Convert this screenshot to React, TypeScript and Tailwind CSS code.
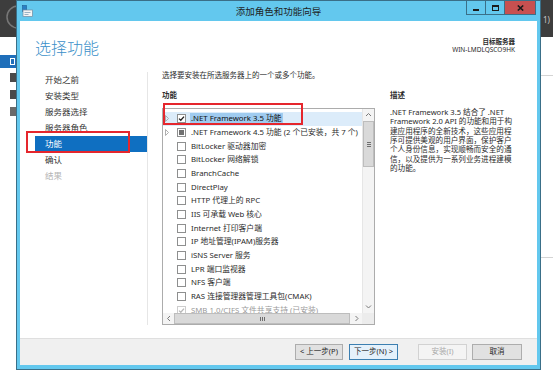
type Check = "on" | "mixed" | "installed";

type Feature = {
  label: string;
  check?: Check;
  expand?: boolean;
  selected?: boolean;
};

const features: Feature[] = [
  { label: ".NET Framework 3.5 功能", check: "on", expand: true, selected: true },
  { label: ".NET Framework 4.5 功能 (2 个已安装，共 7 个)", check: "mixed", expand: true },
  { label: "BitLocker 驱动器加密" },
  { label: "BitLocker 网络解锁" },
  { label: "BranchCache" },
  { label: "DirectPlay" },
  { label: "HTTP 代理上的 RPC" },
  { label: "IIS 可承载 Web 核心" },
  { label: "Internet 打印客户端" },
  { label: "IP 地址管理(IPAM)服务器" },
  { label: "iSNS Server 服务" },
  { label: "LPR 端口监视器" },
  { label: "NFS 客户端" },
  { label: "RAS 连接管理器管理工具包(CMAK)" },
  { label: "SMB 1.0/CIFS 文件共享支持 (已安装)", check: "installed" },
];

const steps = [
  { label: "开始之前" },
  { label: "安装类型" },
  { label: "服务器选择" },
  { label: "服务器角色" },
  { label: "功能", active: true },
  { label: "确认" },
  { label: "结果", disabled: true },
];

const description = [
  ".NET Framework 3.5 结合了 .NET",
  "Framework 2.0 API 的功能和用于构",
  "建应用程序的全新技术，这些应用程",
  "序可提供美观的用户界面，保护客户",
  "个人身份信息，实现顺畅而安全的通",
  "信，以及提供为一系列业务进程建模",
  "的功能。",
];

function Chevron({ dir }: { dir: "up" | "down" | "left" | "right" }) {
  const d = {
    up: "M1 4 L3.5 1.5 L6 4",
    down: "M1 1.5 L3.5 4 L6 1.5",
    left: "M4 1 L1.5 3.5 L4 6",
    right: "M1.5 1 L4 3.5 L1.5 6",
  }[dir];
  const vertical = dir === "up" || dir === "down";
  return (
    <svg
      width={vertical ? 7 : 6}
      height={vertical ? 6 : 7}
      viewBox={vertical ? "0 0 7 6" : "0 0 6 7"}
      fill="none"
      stroke="#7a7a7a"
      strokeWidth="1"
    >
      <path d={d} />
    </svg>
  );
}

function CheckBox({ state }: { state?: Check }) {
  return (
    <span
      className={`flex h-[9px] w-[9px] shrink-0 items-center justify-center border bg-white ${state === "installed" ? "border-[#cdcdcd]" : "border-[#8e8f8f]"}`}
    >
      {(state === "on" || state === "installed") && (
        <svg width="7" height="7" viewBox="0 0 7 7" fill="none">
          <path
            d="M1 3.6 L2.8 5.3 L6 1.6"
            stroke={state === "installed" ? "#b8b8b8" : "#1f1f1f"}
            strokeWidth="1.3"
          />
        </svg>
      )}
      {state === "mixed" && <span className="h-[5px] w-[5px] bg-[#707070]" />}
    </span>
  );
}

function FeatureRow({ f }: { f: Feature }) {
  return (
    <div
      className={`flex h-[13.67px] shrink-0 items-center whitespace-nowrap pl-[2px] ${f.selected ? "bg-[#dcecfa]" : ""}`}
    >
      <span className="flex w-[12px] shrink-0 items-center">
        {f.expand && (
          <svg width="4" height="7" viewBox="0 0 4 7" fill="none">
            <path d="M0.5 0.5 L3.5 3.5 L0.5 6.5 Z" stroke="#a6a6a6" strokeWidth="0.9" />
          </svg>
        )}
      </span>
      <CheckBox state={f.check} />
      <span
        className={`ml-[4px] px-[1px] text-[7.8px] leading-[11px] ${f.selected ? "bg-[#9fcbef] text-[#111]" : f.check === "installed" ? "text-[#9a9a9a]" : "text-[#2b2b2b]"}`}
      >
        {f.label}
      </span>
    </div>
  );
}

function FeatureList() {
  return (
    <div className="mt-[8px] flex h-[217px] flex-col border border-[#acacac] bg-white">
      <div className="flex min-h-0 flex-1">
        <div className="flex min-w-0 flex-1 flex-col overflow-hidden pt-[3px]">
          {features.map((f) => (
            <FeatureRow key={f.label} f={f} />
          ))}
        </div>
        <div className="flex w-[12px] flex-col border-l border-[#e6e6e6] bg-[#f4f4f4]">
          <span className="flex h-[12px] items-center justify-center">
            <Chevron dir="up" />
          </span>
          <span className="flex h-[46px] flex-col items-center justify-center gap-[1px] border border-[#bdbdbd] bg-[#d9d9d9]">
            <span className="h-px w-[4px] bg-[#6e6e6e]" />
            <span className="h-px w-[4px] bg-[#6e6e6e]" />
            <span className="h-px w-[4px] bg-[#6e6e6e]" />
          </span>
          <span className="flex-1" />
          <span className="flex h-[12px] items-center justify-center">
            <Chevron dir="down" />
          </span>
        </div>
      </div>
      <div className="flex h-[11px] shrink-0">
        <div className="flex flex-1 items-stretch bg-[#f4f4f4]">
          <span className="flex w-[11px] items-center justify-center">
            <Chevron dir="left" />
          </span>
          <span className="flex w-[176px] items-center justify-center gap-[1px] border border-[#bdbdbd] bg-[#d9d9d9]">
            <span className="h-[4px] w-px bg-[#6e6e6e]" />
            <span className="h-[4px] w-px bg-[#6e6e6e]" />
            <span className="h-[4px] w-px bg-[#6e6e6e]" />
          </span>
          <span className="flex-1" />
          <span className="flex w-[11px] items-center justify-center">
            <Chevron dir="right" />
          </span>
        </div>
        <div className="w-[12px] bg-[#ececec]" />
      </div>
    </div>
  );
}

function TitleIcon() {
  return (
    <svg width="11" height="12" viewBox="0 0 11 12">
      <rect x="0.5" y="0.5" width="4" height="6" fill="#2a7fc4" stroke="#1d5e94" strokeWidth="0.6" />
      <rect x="1" y="5" width="9.5" height="6.5" fill="#f4f4f4" stroke="#6f8aa0" strokeWidth="0.7" />
      <rect x="2.5" y="7" width="6" height="1" fill="#9bb2c4" />
      <rect x="2.5" y="9" width="4" height="1" fill="#9bb2c4" />
    </svg>
  );
}

function CaptionButtons() {
  return (
    <div className="-mt-px mr-[4px] flex h-[15px] border border-[#3a6f88]">
      <span className="flex w-[19px] items-end justify-center border-r border-[#3a6f88] pb-[3px]">
        <span className="h-[2px] w-[6px] bg-[#1c1c1c]" />
      </span>
      <span className="flex w-[19px] items-center justify-center border-r border-[#3a6f88]">
        <span className="h-[6px] w-[7px] border border-t-2 border-[#1c1c1c]" />
      </span>
      <span className="flex w-[30px] items-center justify-center bg-[#c75050]">
        <svg width="7" height="6" viewBox="0 0 7 6" fill="none">
          <path d="M0.8 0.5 L6.2 5.5 M6.2 0.5 L0.8 5.5" stroke="#1a1a1a" strokeWidth="1.6" />
        </svg>
      </span>
    </div>
  );
}

function WizardWindow() {
  return (
    <div className="absolute left-[16px] top-0 flex h-[370px] w-[525px] flex-col border border-[#3a6f88] bg-[#63c8ee] px-[3px] pb-[4px]">
      <div className="-mx-[3px] grid h-[20px] shrink-0 grid-cols-[1fr_auto_1fr] items-start">
        <span className="ml-[5px] mt-[4px]">
          <TitleIcon />
        </span>
        <span className="text-[9.5px] leading-[21px] text-[#1f1f1f]">添加角色和功能向导</span>
        <span className="flex justify-end">
          <CaptionButtons />
        </span>
      </div>

      <div className="flex min-h-0 flex-1 flex-col bg-white">
        <div className="flex h-[45px] shrink-0 items-start justify-between pl-[15px] pr-[22px]">
          <h1 className="mt-[18px] text-[16px] font-light leading-[18px] text-[#3a8fc9]">选择功能</h1>
          <div className="mt-[17px] flex flex-col items-end text-[6.5px] leading-[8px] text-[#2b2b2b]">
            <span className="font-bold">目标服务器</span>
            <span>WIN-LMDLQSCO9HK</span>
          </div>
        </div>

        <div className="flex min-h-0 flex-1">
          <nav className="mb-[13px] mt-[6px] flex w-[128px] shrink-0 flex-col border-r border-[#e6e6e6] pl-[15px]">
            {steps.map((s) => (
              <div
                key={s.label}
                className={`flex h-[16px] items-center pl-[10px] text-[8.5px] ${s.active ? "bg-[#0f6fc1] text-white" : s.disabled ? "text-[#b4b4b4]" : "text-[#333]"}`}
              >
                {s.label}
              </div>
            ))}
          </nav>

          <section className="ml-[14px] flex w-[213px] shrink-0 flex-col pt-[4px]">
            <p className="h-[10px] whitespace-nowrap text-[7.5px] leading-[10px] text-[#2b2b2b]">
              选择要安装在所选服务器上的一个或多个功能。
            </p>
            <h2 className="mt-[10px] h-[10px] text-[7.5px] font-bold leading-[10px] text-[#2b2b2b]">功能</h2>
            <FeatureList />
          </section>

          <section className="ml-[15px] flex w-[130px] shrink-0 flex-col pt-[24px]">
            <h2 className="h-[10px] text-[7.5px] font-bold leading-[10px] text-[#2b2b2b]">描述</h2>
            <div className="mt-[8px] text-[7.6px] leading-[9.33px] text-[#2b2b2b]">
              {description.map((line) => (
                <div key={line} className="whitespace-nowrap">
                  {line}
                </div>
              ))}
            </div>
          </section>
        </div>

        <div className="flex h-[27px] shrink-0 items-center justify-end border-t border-[#dfdfdf] bg-[#f0f0f0] pr-[15px] text-[7.5px]">
          <button className="h-[16px] w-[48px] border border-[#adadad] bg-[#e1e1e1] text-[#1f1f1f]">
            &lt; 上一步(P)
          </button>
          <button className="ml-[6px] h-[16px] w-[49px] border border-[#3c7fb1] bg-[#e5f1fb] text-[#1f1f1f]">
            下一步(N) &gt;
          </button>
          <button className="ml-[20px] h-[16px] w-[49px] border border-[#d2d2d2] bg-[#f4f4f4] text-[#a8a8a8]">
            安装(I)
          </button>
          <button className="ml-[5px] h-[16px] w-[50px] border border-[#adadad] bg-[#e1e1e1] text-[#1f1f1f]">
            取消
          </button>
        </div>
      </div>
    </div>
  );
}

function Backdrop() {
  return (
    <div className="flex h-full flex-col">
      <div className="flex h-[37px] shrink-0 items-start justify-between bg-[#3d3d3d]">
        <svg className="ml-[6px] mt-[5px]" width="24" height="24" viewBox="0 0 24 24" fill="none">
          <circle cx="12" cy="12" r="11" stroke="#777" strokeWidth="1.5" />
        </svg>
        <span className="mr-[3px] mt-[15px] text-[8px] leading-[10px] text-[#c9c9c9]">1)</span>
      </div>
      <div className="flex flex-1">
        <div className="flex w-[16px] flex-col pt-[18px]">
          <div className="flex h-[13px] items-center justify-end bg-[#1f6fba] pr-[1px]">
            <span className="h-[7px] w-[5px] border border-white" />
          </div>
          <span className="ml-[10px] mt-[5px] h-[9px] w-[6px] bg-[#4a4a4a]" />
          <span className="ml-[10px] mt-[8px] h-[9px] w-[6px] bg-[#4a4a4a]" />
          <span className="ml-[10px] mt-[8px] h-[9px] w-[6px] bg-[#6a6a6a]" />
        </div>
        <div className="flex-1" />
        <div className="flex w-[12px] flex-col">
          <span className="mt-[38px] h-px bg-[#d4d4d4]" />
          <span className="mt-[181px] h-px bg-[#d4d4d4]" />
        </div>
      </div>
    </div>
  );
}

export default function App() {
  return (
    <div className="relative h-[377px] w-[553px] overflow-hidden bg-white font-['Noto_Sans','Noto_Sans_CJK_SC',sans-serif]">
      <Backdrop />
      <WizardWindow />
      <div className="absolute left-[26px] top-[131px] h-[22px] w-[104px] border-2 border-[#e5262d]" />
      <div className="absolute left-[163px] top-[103px] h-[22px] w-[140px] border-2 border-[#e5262d]" />
    </div>
  );
}
